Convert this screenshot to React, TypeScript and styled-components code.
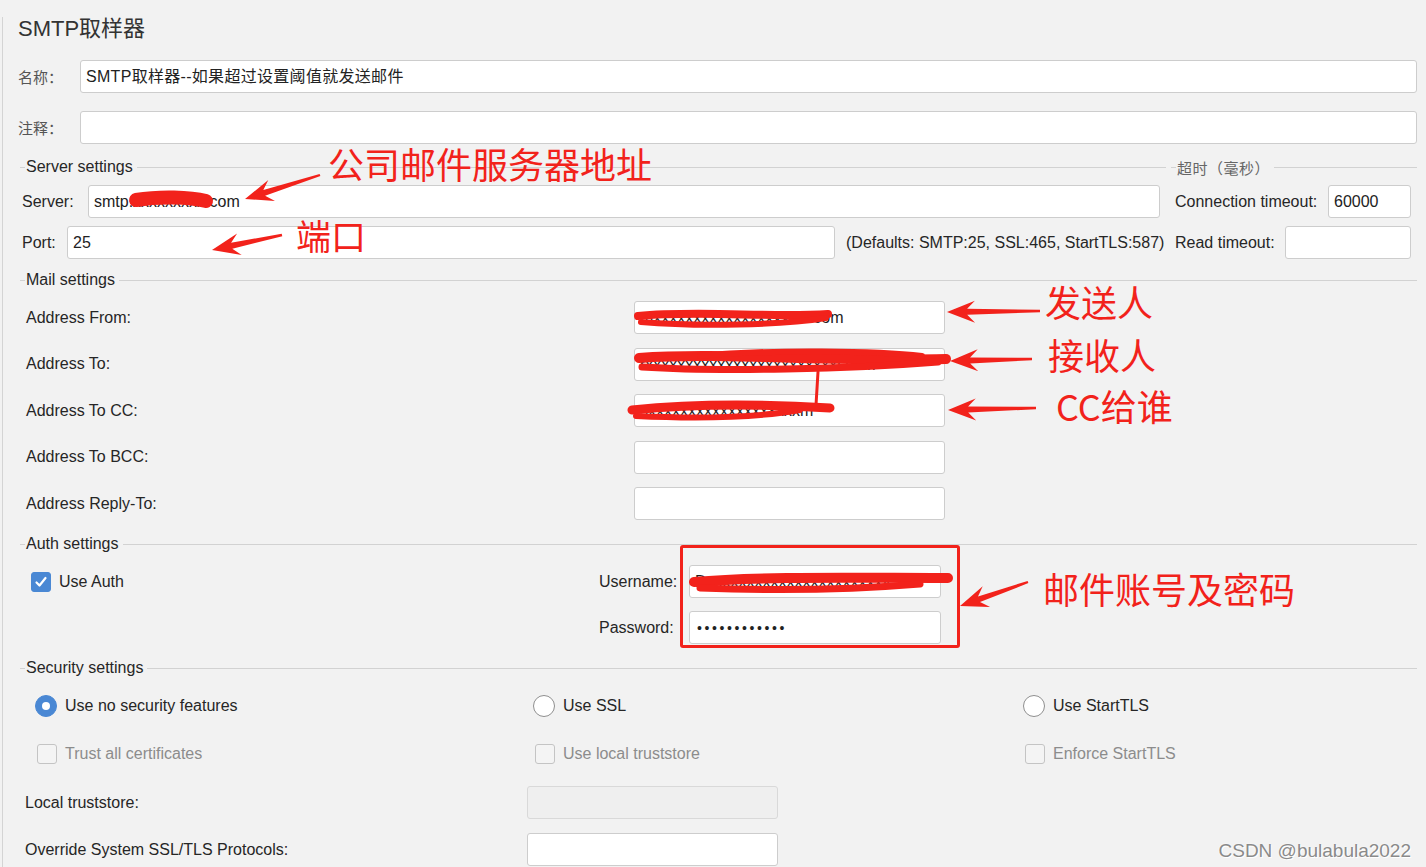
import * as React from 'react';
import styled, {createGlobalStyle} from 'styled-components';

const ui = `"Liberation Sans", "Noto Sans CJK SC", Arial, sans-serif`;
const red = '#f2221b';

const GlobalStyle = createGlobalStyle`
  html, body {
    margin: 0;
    padding: 0;
    background: #f2f2f2;
  }
  * {
    box-sizing: border-box;
  }
`

const Screen = styled.div`
  position: relative;
  width: 1426px;
  height: 867px;
  overflow: hidden;
  background: #f2f2f2;
  font-family: ${ui};
  color: #262626;
`
const Frame = styled.div`
  margin-left: 2px;
  height: 100%;
  border-left: 1px solid #d4d4d4;
  padding-right: 9px;
`
const Title = styled.div`
  margin: 17px 0 0 15px;
  height: 24px;
  line-height: 24px;
  font-size: 22px;
  color: #333;
`
const NameRow = styled.div<{top: number}>`
  display: flex;
  align-items: center;
  margin-top: ${p => p.top}px;
  height: 33px;
`
const CnLabel = styled.div`
  flex: none;
  width: 77px;
  padding-left: 15px;
  font-size: 15px;
  color: #555;
`
const Input = styled.div<{w?: number; disabled?: boolean; grow?: boolean}>`
  flex: ${p => p.grow ? '1' : 'none'};
  width: ${p => p.w ? `${p.w}px` : 'auto'};
  height: 33px;
  line-height: 31px;
  padding-left: 5px;
  border: 1px solid ${p => p.disabled ? '#d9d9d9' : '#cdcdcd'};
  border-radius: 3px;
  background: ${p => p.disabled ? '#efefef' : '#fff'};
  font-size: 16px;
  color: #222;
  white-space: nowrap;
  overflow: hidden;
`
const CnValue = styled.span`
  letter-spacing: 0.3px;
`
const Header = styled.div<{top: number; left?: number}>`
  display: flex;
  align-items: center;
  height: 20px;
  margin-top: ${p => p.top}px;
  margin-left: ${p => p.left ?? 17}px;
  &::before {
    content: '';
    width: 5px;
    height: 1px;
    margin-right: 1px;
    background: #d2d2d2;
  }
  &::after {
    content: '';
    flex: 1;
    height: 1px;
    margin-left: 4px;
    background: #d2d2d2;
  }
`
const Legend = styled.span<{cn?: boolean}>`
  font-size: ${p => p.cn ? 15 : 16}px;
  color: ${p => p.cn ? '#666' : '#262626'};
  letter-spacing: ${p => p.cn ? '0.5px' : '0'};
`
const ServerArea = styled.div`
  display: flex;
  gap: 5px;
`
const LeftGroup = styled.div`
  flex: none;
  width: 1163px;
`
const RightGroup = styled.div`
  flex: 1;
  min-width: 0;
`
const FieldRow = styled.div<{top: number}>`
  display: flex;
  align-items: center;
  height: 33px;
  margin-top: ${p => p.top}px;
`
const Label = styled.div<{w?: number; indent?: number}>`
  flex: none;
  width: ${p => p.w ? `${p.w}px` : 'auto'};
  padding-left: ${p => p.indent ?? 0}px;
  font-size: 16px;
  white-space: nowrap;
`
const Gap = styled.span`
  flex: none;
  width: 6px;
`
const Hint = styled.div`
  margin-left: 11px;
  font-size: 16px;
  white-space: nowrap;
`
const TimeoutRow = styled(FieldRow)`
  justify-content: space-between;
  padding: 0 6px 0 4px;
`
const MailGrid = styled.div`
  display: grid;
  grid-template-columns: 631px 311px;
  row-gap: 13.5px;
  margin-top: 11px;
  align-items: center;
`
const AuthGrid = styled.div`
  display: grid;
  grid-template-columns: 596px 90px 252px;
  grid-template-rows: 33px 33px;
  row-gap: 13px;
  margin-top: 11px;
  align-items: center;
`
const CheckLine = styled.label<{muted?: boolean}>`
  display: flex;
  align-items: center;
  gap: 8px;
  font-size: 16px;
  color: ${p => p.muted ? '#8c8c8c' : '#262626'};
`
const AuthCheck = styled(CheckLine)`
  margin-left: 28px;
`
const Box = styled.span<{checked?: boolean}>`
  display: inline-flex;
  align-items: center;
  justify-content: center;
  width: 20px;
  height: 20px;
  border-radius: 3px;
  border: 1px solid ${p => p.checked ? '#4a88d4' : '#c4c4c4'};
  background: ${p => p.checked ? '#4a88d4' : '#f4f4f4'};
`
const Radio = styled.span<{on?: boolean}>`
  display: inline-flex;
  align-items: center;
  justify-content: center;
  width: 22px;
  height: 22px;
  border-radius: 50%;
  border: 1px solid ${p => p.on ? '#4a88d4' : '#8f8f8f'};
  background: ${p => p.on ? '#4a88d4' : '#fff'};
  &::after {
    content: '';
    display: ${p => p.on ? 'block' : 'none'};
    width: 8px;
    height: 8px;
    border-radius: 50%;
    background: #fff;
  }
`
const OptionGrid = styled.div<{top: number}>`
  display: grid;
  grid-template-columns: 498px 490px auto;
  margin: ${p => p.top}px 0 0 32px;
  align-items: center;
`
const Indented = styled.div`
  margin-left: 2px;
`
const TrustGrid = styled.div`
  display: grid;
  grid-template-columns: 502px 251px;
  grid-template-rows: 33px 33px;
  row-gap: 14px;
  margin: 22px 0 0 22px;
  align-items: center;
`
const Dots = styled.span`
  font-size: 14px;
  letter-spacing: 2.6px;
  padding-left: 2px;
`
const Note = styled.div<{x: number; y: number; size?: number}>`
  position: absolute;
  left: ${p => p.x}px;
  top: ${p => p.y}px;
  font-family: "Noto Sans CJK SC", sans-serif;
  font-size: ${p => p.size ?? 36}px;
  line-height: 1.1;
  color: ${red};
  white-space: nowrap;
`
const Marker = styled.div`
  position: absolute;
  left: 680px;
  top: 545px;
  width: 280px;
  height: 103px;
  border: 3px solid ${red};
  border-radius: 3px;
`
const Overlay = styled.svg`
  position: absolute;
  left: 0;
  top: 0;
  pointer-events: none;
`
const Watermark = styled.div`
  position: absolute;
  right: 15px;
  bottom: 5px;
  font-size: 19px;
  color: #8a8a8a;
  text-shadow: 0 0 2px #fff, 1px 1px 0 #fff;
`

const arrow = (tx: number, ty: number, hx: number, hy: number) => {
    const len = Math.hypot(hx - tx, hy - ty);
    const ux = (hx - tx) / len, uy = (hy - ty) / len;
    const nx = -uy, ny = ux;
    const L = 28, W = 11, N = 3;
    const p = (a: number, b: number) => `${(hx - ux * a + nx * b).toFixed(1)},${(hy - uy * a + ny * b).toFixed(1)}`;
    const t = (b: number) => `${(tx + nx * b).toFixed(1)},${(ty + ny * b).toFixed(1)}`;
    return [p(0, 0), p(L, W), p(L * 0.72, N), t(1.2), t(-1.2), p(L * 0.72, -N), p(L, -W)].join(' ');
};

const Check = () => (
    <svg width="14" height="14" viewBox="0 0 14 14">
        <polyline points="2.5,7.5 5.5,10.5 11.5,3" fill="none" stroke="#fff" strokeWidth="2.2" strokeLinecap="round" strokeLinejoin="round"/>
    </svg>
);

// red redaction strokes drawn over the screenshot
const scribbles: [string, number][] = [
    ['M136,200 C160,196 190,197 206,201', 14],
    ['M638,316 C700,310 770,318 828,314', 8],
    ['M641,322 C700,327 780,325 826,318', 6],
    ['M639,358 C720,352 830,362 946,359', 10],
    ['M642,367 C720,372 850,369 938,362', 7],
    ['M700,356 C770,349 880,351 922,356', 6],
    ['M818,372 L816,405', 3],
    ['M632,410 C700,403 780,405 830,408', 9],
    ['M636,416 C700,419 760,417 800,410', 6],
    ['M694,582 C760,576 860,578 948,578', 10],
    ['M700,588 C780,591 860,589 920,584', 7],
];

const arrows = [
    arrow(320, 175, 245, 199),
    arrow(282, 235, 212, 250),
    arrow(1040, 311, 947, 312),
    arrow(1032, 359, 950, 361),
    arrow(1036, 408, 948, 410),
    arrow(1028, 582, 960, 606),
];

const mailRows = [
    {label: 'Address From:', value: 'mxxxxxxxxxxxxxxxxxxxl.com'},
    {label: 'Address To:', value: 'rxxxxxxxxxxxxxxxxxxxxxxxxl.com'},
    {label: 'Address To CC:', value: 'sxxxxxxxxxxxxxxxxxxxm'},
    {label: 'Address To BCC:', value: ''},
    {label: 'Address Reply-To:', value: ''},
];

export default function App() {
    return (
        <Screen>
            <GlobalStyle/>
            <Frame>
                <Title>SMTP取样器</Title>
                <NameRow top={19}>
                    <CnLabel>名称：</CnLabel>
                    <Input grow><CnValue>SMTP取样器--如果超过设置阈值就发送邮件</CnValue></Input>
                </NameRow>
                <NameRow top={18}>
                    <CnLabel>注释：</CnLabel>
                    <Input grow/>
                </NameRow>

                <ServerArea>
                    <LeftGroup>
                        <Header top={13}><Legend>Server settings</Legend></Header>
                        <FieldRow top={8}>
                            <Label w={85} indent={19}>Server:</Label>
                            <Input grow>smtp.xxxxxxxxx.com</Input>
                            <Gap/>
                        </FieldRow>
                        <FieldRow top={8}>
                            <Label w={64} indent={19}>Port:</Label>
                            <Input w={768}>25</Input>
                            <Hint>(Defaults: SMTP:25, SSL:465, StartTLS:587)</Hint>
                        </FieldRow>
                    </LeftGroup>
                    <RightGroup>
                        <Header top={13} left={0}><Legend cn>超时（毫秒）</Legend></Header>
                        <TimeoutRow top={8}>
                            <Label>Connection timeout:</Label>
                            <Input w={83}>60000</Input>
                        </TimeoutRow>
                        <TimeoutRow top={8}>
                            <Label>Read timeout:</Label>
                            <Input w={126}/>
                        </TimeoutRow>
                    </RightGroup>
                </ServerArea>

                <Header top={11}><Legend>Mail settings</Legend></Header>
                <MailGrid>
                    {mailRows.map(row => (
                        <React.Fragment key={row.label}>
                            <Label indent={23}>{row.label}</Label>
                            <Input>{row.value}</Input>
                        </React.Fragment>
                    ))}
                </MailGrid>

                <Header top={14}><Legend>Auth settings</Legend></Header>
                <AuthGrid>
                    <AuthCheck>
                        <Box checked><Check/></Box>Use Auth
                    </AuthCheck>
                    <Label>Username:</Label>
                    <Input>Dxxxxxxxxxxxxxxxxxxxxxxy</Input>
                    <span/>
                    <Label>Password:</Label>
                    <Input><Dots>••••••••••••</Dots></Input>
                </AuthGrid>

                <Header top={14}><Legend>Security settings</Legend></Header>
                <OptionGrid top={17}>
                    <CheckLine><Radio on/>Use no security features</CheckLine>
                    <CheckLine><Radio/>Use SSL</CheckLine>
                    <CheckLine><Radio/>Use StartTLS</CheckLine>
                </OptionGrid>
                <OptionGrid top={27}>
                    <Indented><CheckLine muted><Box/>Trust all certificates</CheckLine></Indented>
                    <Indented><CheckLine muted><Box/>Use local truststore</CheckLine></Indented>
                    <Indented><CheckLine muted><Box/>Enforce StartTLS</CheckLine></Indented>
                </OptionGrid>
                <TrustGrid>
                    <Label>Local truststore:</Label>
                    <Input disabled/>
                    <Label>Override System SSL/TLS Protocols:</Label>
                    <Input/>
                </TrustGrid>
            </Frame>

            <Overlay width="1426" height="867" viewBox="0 0 1426 867">
                {scribbles.map(([d, w], i) => (
                    <path key={i} d={d} fill="none" stroke={red} strokeWidth={w} strokeLinecap="round"/>
                ))}
                {arrows.map((pts, i) => <polygon key={i} points={pts} fill={red}/>)}
            </Overlay>
            <Marker/>
            <Note x={328} y={144}>公司邮件服务器地址</Note>
            <Note x={296} y={216} size={35}>端口</Note>
            <Note x={1045} y={282}>发送人</Note>
            <Note x={1048} y={335}>接收人</Note>
            <Note x={1056} y={386}>CC给谁</Note>
            <Note x={1043} y={569}>邮件账号及密码</Note>
            <Watermark>CSDN @bulabula2022</Watermark>
        </Screen>
    );
}
